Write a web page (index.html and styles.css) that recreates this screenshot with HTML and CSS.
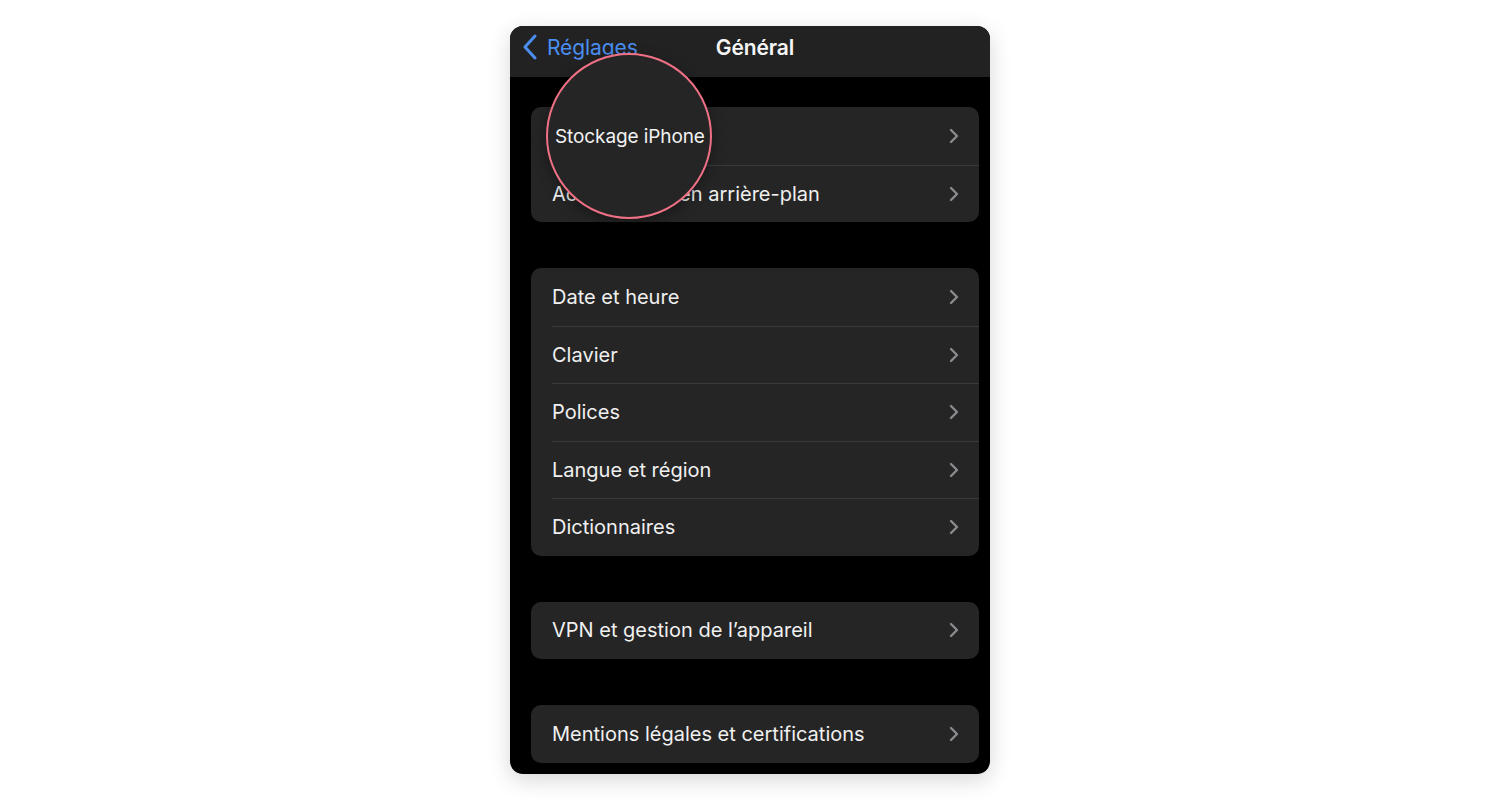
FILE: index.html
```html
<!DOCTYPE html>
<html lang="fr">
<head>
<meta charset="utf-8">
<link rel="stylesheet" href="styles.css">
</head>
<body>
<div class="stage">
  <div class="phone">
    <div class="navbar">
      <div class="back">
        <svg class="back-icon" width="16" height="26" viewBox="0 0 16 26"><path d="M13 2 L3 13 L13 24" fill="none" stroke="#4b8ef0" stroke-width="3" stroke-linecap="round" stroke-linejoin="round"/></svg>
        <span>Réglages</span>
      </div>
      <div class="title">Général</div>
    </div>
    <div class="content">
      <div class="group">
        <div class="row"><span>Stockage iPhone</span><svg class="chev" width="10" height="16" viewBox="0 0 10 16"><path d="M2 2 L8 8 L2 14" /></svg></div>
        <div class="row"><span>Actualisation en arrière-plan</span><svg class="chev" width="10" height="16" viewBox="0 0 10 16"><path d="M2 2 L8 8 L2 14" /></svg></div>
      </div>
      <div class="group">
        <div class="row"><span>Date et heure</span><svg class="chev" width="10" height="16" viewBox="0 0 10 16"><path d="M2 2 L8 8 L2 14" /></svg></div>
        <div class="row"><span>Clavier</span><svg class="chev" width="10" height="16" viewBox="0 0 10 16"><path d="M2 2 L8 8 L2 14" /></svg></div>
        <div class="row"><span>Polices</span><svg class="chev" width="10" height="16" viewBox="0 0 10 16"><path d="M2 2 L8 8 L2 14" /></svg></div>
        <div class="row"><span>Langue et région</span><svg class="chev" width="10" height="16" viewBox="0 0 10 16"><path d="M2 2 L8 8 L2 14" /></svg></div>
        <div class="row"><span>Dictionnaires</span><svg class="chev" width="10" height="16" viewBox="0 0 10 16"><path d="M2 2 L8 8 L2 14" /></svg></div>
      </div>
      <div class="group">
        <div class="row"><span>VPN et gestion de l’appareil</span><svg class="chev" width="10" height="16" viewBox="0 0 10 16"><path d="M2 2 L8 8 L2 14" /></svg></div>
      </div>
      <div class="group">
        <div class="row"><span>Mentions légales et certifications</span><svg class="chev" width="10" height="16" viewBox="0 0 10 16"><path d="M2 2 L8 8 L2 14" /></svg></div>
      </div>
    </div>
    <div class="lens"><span>Stockage iPhone</span></div>
  </div>
</div>
</body>
</html>
```
FILE: styles.css
```css
html, body {
  margin: 0;
  padding: 0;
  background: #ffffff;
}
body {
  font-family: Inter, "Noto Sans", "Liberation Sans", sans-serif;
  color: #f2f2f2;
}
.stage {
  width: 1500px;
  height: 800px;
  display: flex;
  justify-content: center;
  padding-top: 26px;
  box-sizing: border-box;
}
.phone {
  position: relative;
  width: 480px;
  height: 748px;
  background: #000;
  border-radius: 13px;
  overflow: hidden;
  box-shadow: 0 6px 22px rgba(0, 0, 0, 0.16);
}
.navbar {
  height: 51px;
  background: #222222;
  display: flex;
  align-items: center;
  justify-content: center;
  position: relative;
}
.back {
  position: absolute;
  left: 12px;
  top: 8px;
  display: flex;
  align-items: center;
  gap: 9px;
  color: #4b8ef0;
  font-size: 21px;
  letter-spacing: -0.1px;
}
.back-icon {
  display: block;
}
.title {
  font-size: 21px;
  font-weight: 600;
  color: #f5f5f5;
  margin-left: 10px;
  margin-top: -8px;
  letter-spacing: -0.1px;
}
.content {
  padding: 30px 11px 0 21px;
  display: flex;
  flex-direction: column;
  gap: 46px;
}
.group {
  background: #252525;
  border-radius: 10px;
  overflow: hidden;
}
.row {
  height: 57.5px;
  margin-left: 21px;
  padding-right: 20px;
  display: flex;
  align-items: center;
  justify-content: space-between;
  font-size: 20px;
  color: #f0f0f0;
  box-sizing: border-box;
}
.row + .row {
  border-top: 1px solid #3a3a3c;
}
.chev {
  display: block;
  fill: none;
  stroke: #8b8b8f;
  stroke-width: 2.4;
  stroke-linecap: round;
  stroke-linejoin: round;
}
.lens {
  position: absolute;
  left: 36px;
  top: 27px;
  width: 166px;
  height: 166px;
  border-radius: 50%;
  background: #252525;
  border: 2px solid #ef7085;
  box-sizing: border-box;
  box-shadow: 0 4px 14px rgba(0, 0, 0, 0.35);
  display: flex;
  align-items: center;
  padding-left: 7px;
  font-size: 19px;
  color: #f2f2f2;
  letter-spacing: -0.1px;
}
```
